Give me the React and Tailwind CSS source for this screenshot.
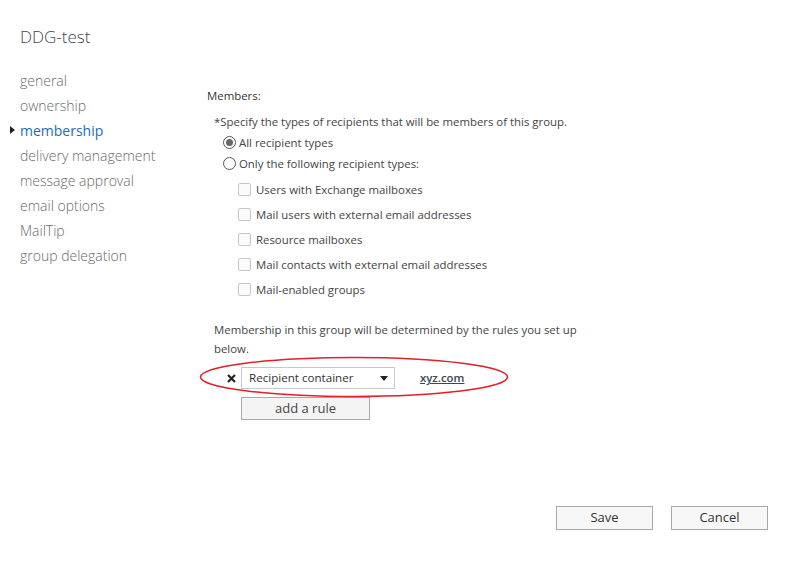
import React from 'react';

const navItems = [
  'general',
  'ownership',
  'membership',
  'delivery management',
  'message approval',
  'email options',
  'MailTip',
  'group delegation',
];

const recipientTypes = [
  'Users with Exchange mailboxes',
  'Mail users with external email addresses',
  'Resource mailboxes',
  'Mail contacts with external email addresses',
  'Mail-enabled groups',
];

const Radio = ({ checked }) => (
  <span className="w-[13px] h-[13px] rounded-full border border-[#555] bg-white flex items-center justify-center shrink-0">
    {checked && <span className="w-[7px] h-[7px] rounded-full bg-[#666]" />}
  </span>
);

const App = () => {
  return (
    <div
      className="w-[800px] h-[563px] bg-white flex flex-col text-[#333] overflow-hidden"
      style={{ fontFamily: '"Open Sans", "Noto Sans", sans-serif' }}
    >
      <div className="flex flex-1">
        {/* Left nav */}
        <div className="w-[207px] shrink-0 pt-[25px]">
          <h1 className="pl-[20px] text-[17px] leading-[24px] font-light text-[#444]">DDG-test</h1>
          <ul className="mt-[19px]">
            {navItems.map((item) => {
              const active = item === 'membership';
              return (
                <li key={item} className="relative h-[25px] flex items-center pl-[20px] text-[14px] font-light">
                  {active && (
                    <svg className="absolute left-[10px] top-[8px]" width="5" height="8" viewBox="0 0 5 8">
                      <path d="M0 0 L5 4 L0 8 Z" fill="#222" />
                    </svg>
                  )}
                  <span className={active ? 'text-[#1a6dba] font-normal' : 'text-[#6a6a6a]'}>{item}</span>
                </li>
              );
            })}
          </ul>
        </div>

        {/* Main content */}
        <div className="relative flex-1 pt-[88px] text-[11.4px]">
          <div className="leading-[16px] text-[#333]">Members:</div>

          <div className="ml-[7px] mt-[7px]">
            <div className="h-[21px] flex items-center text-[#444]">
              *Specify the types of recipients that will be members of this group.
            </div>
            <label className="h-[21px] flex items-center gap-[3px] ml-[9px] text-[#444]">
              <Radio checked />
              All recipient types
            </label>
            <label className="h-[21px] flex items-center gap-[3px] ml-[9px] text-[#444]">
              <Radio />
              Only the following recipient types:
            </label>

            <ul className="mt-[3px] ml-[24px]">
              {recipientTypes.map((type) => (
                <li key={type} className="h-[25px] flex items-center gap-[5px] text-[#444]">
                  <span className="w-[13px] h-[13px] rounded-[2px] border border-[#c6c6c6] bg-[#fbfbfb] shrink-0" />
                  {type}
                </li>
              ))}
            </ul>

            <p className="mt-[18px] w-[372px] leading-[19px] text-[#444]">
              Membership in this group will be determined by the rules you set up below.
            </p>

            <div className="relative mt-[9px] flex items-center">
              <svg
                className="absolute left-[-15px] top-[-11px] pointer-events-none"
                width="310"
                height="42"
                viewBox="0 0 310 42"
              >
                <ellipse cx="155" cy="21" rx="153.5" ry="19.5" fill="none" stroke="#e0202a" strokeWidth="1.6" />
              </svg>
              <span className="w-[27px] flex justify-end pr-[5px]">
                <svg width="9" height="9" viewBox="0 0 9 9">
                  <path d="M1 1 L8 8 M8 1 L1 8" stroke="#222" strokeWidth="2.2" />
                </svg>
              </span>
              <div className="w-[154px] h-[22px] border border-[#c8c8c8] bg-white flex items-center justify-between pl-[7px] pr-[6px] text-[11.6px] text-[#333]">
                <span>Recipient container</span>
                <svg width="8" height="5" viewBox="0 0 8 5">
                  <path d="M0 0 L8 0 L4 5 Z" fill="#222" />
                </svg>
              </div>
              <a className="ml-[25px] font-semibold text-[#3b4654] underline">xyz.com</a>
            </div>

            <button className="mt-[8px] ml-[27px] w-[129px] h-[23px] border border-[#a9a9a9] bg-[#f4f4f4] text-[13px] text-[#444] flex items-center justify-center">
              add a rule
            </button>
          </div>
        </div>
      </div>

      {/* Footer buttons */}
      <div className="flex justify-end gap-[18px] pr-[32px] pb-[33px]">
        <button className="w-[97px] h-[24px] border border-[#a5a9a9] bg-[#f7f7f7] text-[13px] text-[#333]">Save</button>
        <button className="w-[97px] h-[24px] border border-[#a5a9a9] bg-[#f7f7f7] text-[13px] text-[#333]">Cancel</button>
      </div>
    </div>
  );
};

export default App;
